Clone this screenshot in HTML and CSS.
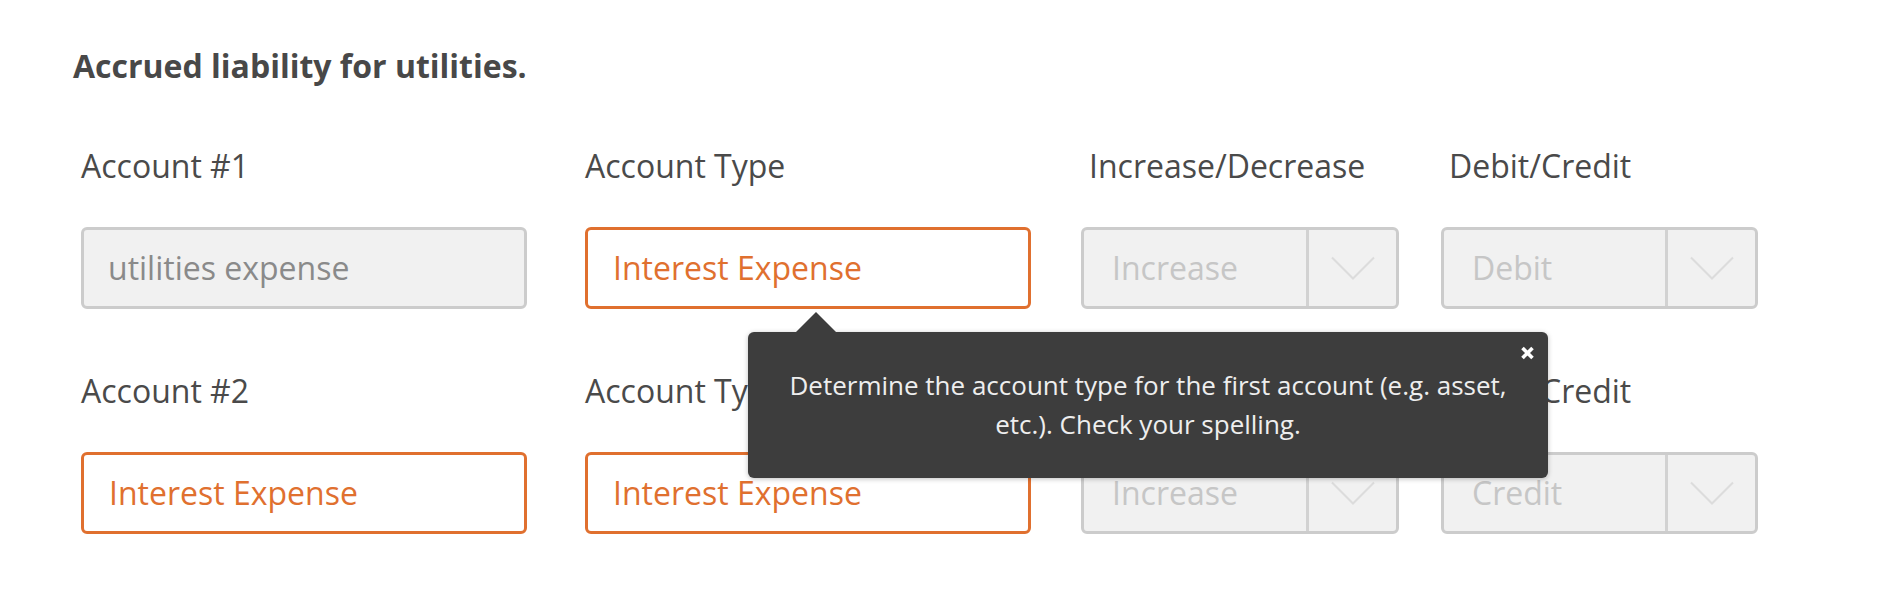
FILE: index.html
```html
<!DOCTYPE html>
<html>
<head>
<meta charset="utf-8">
<link rel="stylesheet" href="styles.css">
</head>
<body>
<div class="page">
  <h1 class="title">Accrued liability for utilities.</h1>
  <div class="grid">
    <div class="field">
      <div class="label">Account #1</div>
      <div class="box box-disabled">utilities expense</div>
    </div>
    <div class="field field-anchor">
      <div class="label">Account Type</div>
      <div class="box box-error">Interest Expense</div>
      <div class="tooltip">
        <span class="tip-close"><svg width="15" height="14" viewBox="0 0 15 14"><path d="M2.5 2 L12.5 12 M12.5 2 L2.5 12" stroke="#ffffff" stroke-width="3.6" stroke-linecap="butt"/></svg></span>
        <p class="tip-text">Determine the account type for the first account (e.g. asset, etc.). Check your spelling.</p>
      </div>
    </div>
    <div class="field">
      <div class="label label-sel">Increase/Decrease</div>
      <div class="select">
        <div class="sel-val">Increase</div>
        <div class="sel-btn"><svg width="44" height="24" viewBox="0 0 44 24"><polyline points="1,1.5 22,22.5 43,1.5" fill="none" stroke="#dcdcdc" stroke-width="2"/></svg></div>
      </div>
    </div>
    <div class="field">
      <div class="label label-sel">Debit/Credit</div>
      <div class="select select-narrow">
        <div class="sel-val">Debit</div>
        <div class="sel-btn"><svg width="44" height="24" viewBox="0 0 44 24"><polyline points="1,1.5 22,22.5 43,1.5" fill="none" stroke="#dcdcdc" stroke-width="2"/></svg></div>
      </div>
    </div>

    <div class="field">
      <div class="label">Account #2</div>
      <div class="box box-error">Interest Expense</div>
    </div>
    <div class="field">
      <div class="label">Account Type</div>
      <div class="box box-error">Interest Expense</div>
    </div>
    <div class="field">
      <div class="label label-sel">Increase/Decrease</div>
      <div class="select">
        <div class="sel-val">Increase</div>
        <div class="sel-btn"><svg width="44" height="24" viewBox="0 0 44 24"><polyline points="1,1.5 22,22.5 43,1.5" fill="none" stroke="#dcdcdc" stroke-width="2"/></svg></div>
      </div>
    </div>
    <div class="field">
      <div class="label label-sel">Debit/Credit</div>
      <div class="select select-narrow">
        <div class="sel-val">Credit</div>
        <div class="sel-btn"><svg width="44" height="24" viewBox="0 0 44 24"><polyline points="1,1.5 22,22.5 43,1.5" fill="none" stroke="#dcdcdc" stroke-width="2"/></svg></div>
      </div>
    </div>
  </div>
</div>
</body>
</html>
```

FILE: styles.css
```css
html, body {
  margin: 0;
  padding: 0;
  background: #ffffff;
}

body {
  font-family: "Open Sans", "Liberation Sans", sans-serif;
  color: #4a4a4a;
  width: 1904px;
  height: 596px;
  overflow: hidden;
}

.page {
  padding: 46px 0 0 73px;
}

.title {
  margin: 0;
  font-size: 32px;
  line-height: 40px;
  font-weight: 700;
  color: #484848;
}

.grid {
  margin: 60px 0 0 8px;
  display: grid;
  grid-template-columns: 504px 496px 360px 317px;
  row-gap: 62px;
}

.field {
  display: flex;
  flex-direction: column;
  gap: 41px;
}

.field-anchor {
  position: relative;
  z-index: 2;
}

.label {
  font-size: 32px;
  line-height: 40px;
  color: #4a4a4a;
  white-space: nowrap;
}

.label-sel {
  padding-left: 8px;
}

.box {
  box-sizing: border-box;
  width: 446px;
  height: 82px;
  border: 3px solid #cccccc;
  border-radius: 6px;
  padding-left: 24px;
  display: flex;
  align-items: center;
  font-size: 32px;
  line-height: 40px;
}

.box-disabled {
  background: #f1f1f1;
  color: #8a8a8a;
}

.box-error {
  background: #ffffff;
  border-color: #e0702f;
  color: #e0702f;
  padding-left: 25px;
}

.select {
  box-sizing: border-box;
  width: 318px;
  height: 82px;
  border: 3px solid #cccccc;
  border-radius: 6px;
  background: #f1f1f1;
  display: flex;
}

.select-narrow {
  width: 317px;
}

.sel-val {
  flex: 1;
  display: flex;
  align-items: center;
  padding-left: 28px;
  font-size: 32px;
  line-height: 40px;
  color: #c6c6c6;
}

.sel-btn {
  width: 87px;
  border-left: 3px solid #d2d2d2;
  display: flex;
  align-items: center;
  justify-content: center;
}

.tooltip {
  position: absolute;
  left: 163px;
  top: 186px;
  width: 800px;
  height: 146px;
  box-sizing: border-box;
  padding: 34px 40px 0;
  background: #3d3d3d;
  border-radius: 6px;
  box-shadow: 0 1px 5px rgba(0, 0, 0, 0.25);
  color: #eeeeee;
}

.tooltip::before {
  content: "";
  position: absolute;
  left: 48px;
  top: -20px;
  border-left: 20px solid transparent;
  border-right: 20px solid transparent;
  border-bottom: 20px solid #3d3d3d;
}

.tip-close {
  position: absolute;
  top: 14px;
  right: 13px;
  width: 15px;
  height: 14px;
  display: block;
}

.tip-close svg {
  display: block;
}

.tip-text {
  margin: 0;
  text-align: center;
  font-size: 26px;
  line-height: 39px;
}
```
